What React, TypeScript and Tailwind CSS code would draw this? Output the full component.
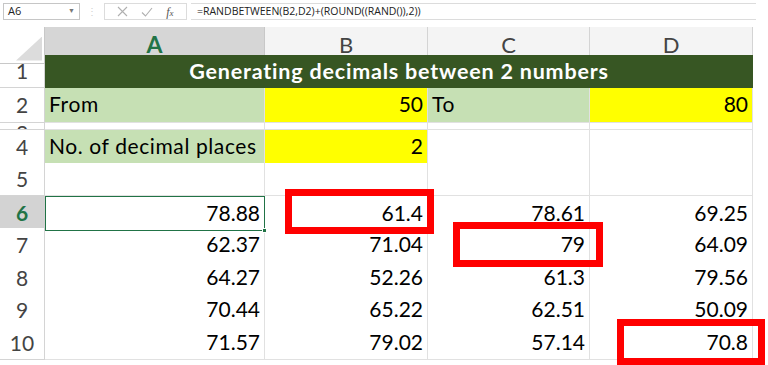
import React from 'react';

const font = { fontFamily: 'Lato, "Open Sans", sans-serif' };

type Cell = { text?: string; align?: 'left' | 'right'; bg?: string };

const data = [
  ['78.88', '61.4', '78.61', '69.25'],
  ['62.37', '71.04', '79', '64.09'],
  ['64.27', '52.26', '61.3', '79.56'],
  ['70.44', '65.22', '62.51', '50.09'],
  ['71.57', '79.02', '57.14', '70.8'],
];

const cols = 'grid grid-cols-[45px_220px_163px_162px_163px]';

function RowLabel({ label, selected }: { label: string; selected?: boolean }) {
  return (
    <div
      className={`flex items-center justify-center border-r border-b border-[#d4d4d4] text-[21px] ${
        selected ? 'bg-[#d3d3d3] font-bold text-[#217346]' : 'bg-white text-[#444]'
      }`}
    >
      {label}
    </div>
  );
}

function DataCell({ c }: { c: Cell }) {
  const isText = c.align !== 'right';
  return (
    <div
      className={`flex items-end pb-[2px] px-[4px] border-r border-b border-[#e1e1e1] text-[21px] text-black ${
        isText ? 'justify-start tracking-[0.6px]' : 'justify-end'
      } ${c.bg ?? 'bg-white'}`}
    >
      {c.text}
    </div>
  );
}

export default function App() {
  return (
    <div className="relative w-[768px] h-[365px] overflow-hidden bg-white" style={font}>
      {/* formula bar */}
      <div className="flex items-center h-[27px] pt-[1px] pb-[5px] text-[11px] text-[#222]" style={{ fontFamily: '"Open Sans", "Noto Sans", sans-serif' }}>
        <div className="ml-[3px] w-[77px] h-[17px] border border-[#c6c6c6] flex items-center justify-between px-[4px]">
          <span>A6</span>
          <span className="text-[7px] text-[#777]">▼</span>
        </div>
        <div className="w-[24px] flex justify-center text-[#d0d0d0] text-[10px]">⋮</div>
        <div className="w-[83px] h-[17px] border border-[#dcdcdc] flex items-center justify-around px-[6px]">
          <svg width="11" height="11" viewBox="0 0 11 11" stroke="#b0b0b0" strokeWidth="1.1">
            <path d="M1 1L10 10M10 1L1 10" />
          </svg>
          <svg width="12" height="10" viewBox="0 0 12 10" fill="none" stroke="#b0b0b0" strokeWidth="1.1">
            <path d="M1 5.5L4.5 9L11 1" />
          </svg>
          <span className="italic text-[#555] text-[12px]" style={{ fontFamily: '"Liberation Serif", serif' }}>
            f<span className="text-[9px]">x</span>
          </span>
        </div>
        <div className="ml-[4px] w-[565px] h-[17px] border-t border-b border-[#dcdcdc] flex items-center pl-[6px] text-[10.5px]">
          =RANDBETWEEN(B2,D2)+(ROUND((RAND()),2))
        </div>
      </div>

      {/* column headers */}
      <div className={`${cols} h-[28px]`}>
        <div className="relative border-r border-b border-[#c8c8c8] bg-white">
          <div
            className="absolute right-[2px] bottom-[2px] w-[26px] h-[24px] bg-[#dcdcdc]"
            style={{ clipPath: 'polygon(100% 0, 100% 100%, 0 100%)' }}
          />
        </div>
        <div className="flex items-center justify-center bg-[#d6d6d6] border-r border-[#c8c8c8] border-b-2 border-b-[#217346] text-[23px] font-bold text-[#217346]">
          A
        </div>
        {['B', 'C', 'D'].map((l) => (
          <div key={l} className="flex items-center justify-center bg-[#f4f4f4] border-r border-b border-[#d4d4d4] text-[22px] text-[#444]">
            {l}
          </div>
        ))}
      </div>

      {/* row 1 title */}
      <div className={`${cols} h-[33px]`}>
        <RowLabel label="1" />
        <div className="col-span-4 flex items-center justify-center bg-[#375623] text-white font-bold text-[21.5px] tracking-[0.8px]">
          Generating decimals between 2 numbers
        </div>
      </div>

      <div className={`${cols} h-[34px]`}>
        <RowLabel label="2" />
        <DataCell c={{ text: 'From', bg: 'bg-[#c6e0b4]' }} />
        <DataCell c={{ text: '50', align: 'right', bg: 'bg-[#ffff00]' }} />
        <DataCell c={{ text: 'To', bg: 'bg-[#c6e0b4]' }} />
        <DataCell c={{ text: '80', align: 'right', bg: 'bg-[#ffff00]' }} />
      </div>

      {/* row 3 nearly hidden */}
      <div className={`${cols} h-[8px]`}>
        <div className="border-r border-b border-[#d4d4d4] flex justify-center">
          <span className="block h-[7px] overflow-hidden text-[21px] leading-[21px] text-[#444]">3</span>
        </div>
        {[0, 1, 2, 3].map((i) => (
          <div key={i} className="border-r border-b border-[#e1e1e1]" />
        ))}
      </div>

      <div className={`${cols} h-[33px]`}>
        <RowLabel label="4" />
        <DataCell c={{ text: 'No. of decimal places', bg: 'bg-[#c6e0b4]' }} />
        <DataCell c={{ text: '2', align: 'right', bg: 'bg-[#ffff00]' }} />
        <DataCell c={{}} />
        <DataCell c={{}} />
      </div>

      <div className={`${cols} h-[32.5px]`}>
        <RowLabel label="5" />
        <DataCell c={{}} />
        <DataCell c={{}} />
        <DataCell c={{}} />
        <DataCell c={{}} />
      </div>

      {data.map((r, ri) => (
        <div key={ri} className={`${cols} h-[32.5px]`}>
          <RowLabel label={String(ri + 6)} selected={ri === 0} />
          {r.map((v, ci) =>
            ri === 0 && ci === 0 ? (
              <div key={ci} className="relative flex items-end justify-end pb-[2px] px-[4px] border border-[#217346] text-[21px] text-black">
                {v}
                <div className="absolute -right-[3px] -bottom-[3px] w-[5px] h-[5px] bg-[#217346] border border-white" />
              </div>
            ) : (
              <DataCell key={ci} c={{ text: v, align: 'right' }} />
            )
          )}
        </div>
      ))}

      {/* red highlight boxes */}
      <div className="absolute left-[285px] top-[189px] w-[149px] h-[45px] border-[7px] border-[#ff0000]" />
      <div className="absolute left-[453px] top-[222px] w-[150px] h-[45px] border-[7px] border-[#ff0000]" />
      <div className="absolute left-[617px] top-[319px] w-[148px] h-[46px] border-[7px] border-[#ff0000]" />
    </div>
  );
}
